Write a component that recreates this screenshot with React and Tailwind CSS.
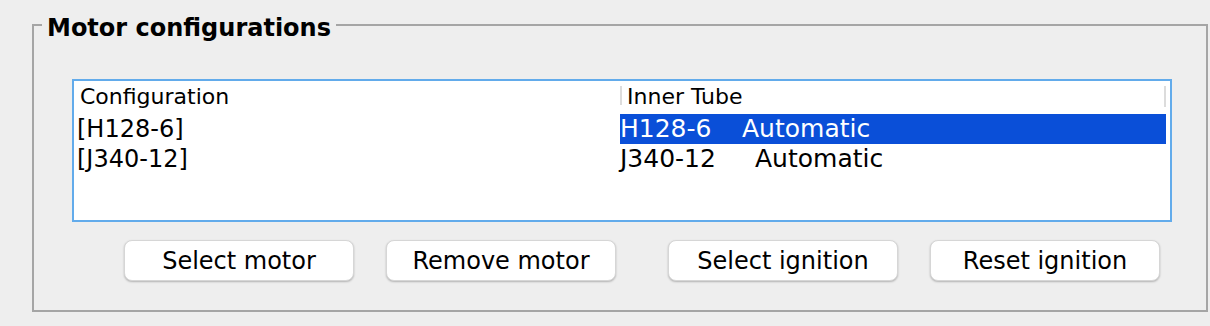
const rows = [
  { config: "[H128-6]", code: "H128-6", codeW: "w-[122px]", selected: true },
  { config: "[J340-12]", code: "J340-12", codeW: "w-[135px]", selected: false },
];

const buttons = [
  { label: "Select motor", gap: "ml-0" },
  { label: "Remove motor", gap: "ml-[32px]" },
  { label: "Select ignition", gap: "ml-[52px]" },
  { label: "Reset ignition", gap: "ml-[32px]" },
];

export default function App() {
  return (
    <div
      className="w-[1210px] h-[326px] bg-[#eeeeee] pt-[7px] pl-[32px] text-black"
      style={{ fontFamily: '"DejaVu Sans", "Liberation Sans", sans-serif' }}
    >
      <fieldset className="w-[1176px] h-[305px] border-2 border-[#a5a5a5]">
        <legend className="ml-[8px] px-[5px] pt-[7px] text-[24px] font-bold leading-[28px]">
          Motor configurations
        </legend>

        <div className="mt-[37px] ml-[38px] w-[1100px] h-[143px] border-2 border-[#62abeb] bg-white">
          <div className="flex h-[33px] pt-[1px] text-[22px] leading-[30px]">
            <div className="w-[546px] pl-[6px]">Configuration</div>
            <div className="w-[546px] flex">
              <div className="w-[2px] h-[19px] mt-[4px] bg-[#dcdcdc]" />
              <div className="flex-1 pl-[5px]">Inner Tube</div>
              <div className="w-[2px] h-[21px] mt-[4px] bg-[#dcdcdc]" />
            </div>
          </div>
          {rows.map((r) => (
            <div key={r.config} className="flex h-[30px] leading-[30px]">
              <div className="w-[546px] pl-[3px] text-[24px]">{r.config}</div>
              <div
                className={
                  r.selected
                    ? "w-[546px] flex text-[25px] bg-[#0a4fd8] text-white"
                    : "w-[546px] flex text-[25px]"
                }
              >
                <span className={r.codeW}>{r.code}</span>
                <span>Automatic</span>
              </div>
            </div>
          ))}
        </div>

        <div className="flex mt-[18px] ml-[90px]">
          {buttons.map((b) => (
            <button
              key={b.label}
              className={`${b.gap} w-[230px] h-[41px] rounded-[8px] bg-white border border-[#d6d6d6] shadow-[0_1px_2px_rgba(0,0,0,0.25)] text-[24px] leading-[30px]`}
            >
              {b.label}
            </button>
          ))}
        </div>
      </fieldset>
    </div>
  );
}
